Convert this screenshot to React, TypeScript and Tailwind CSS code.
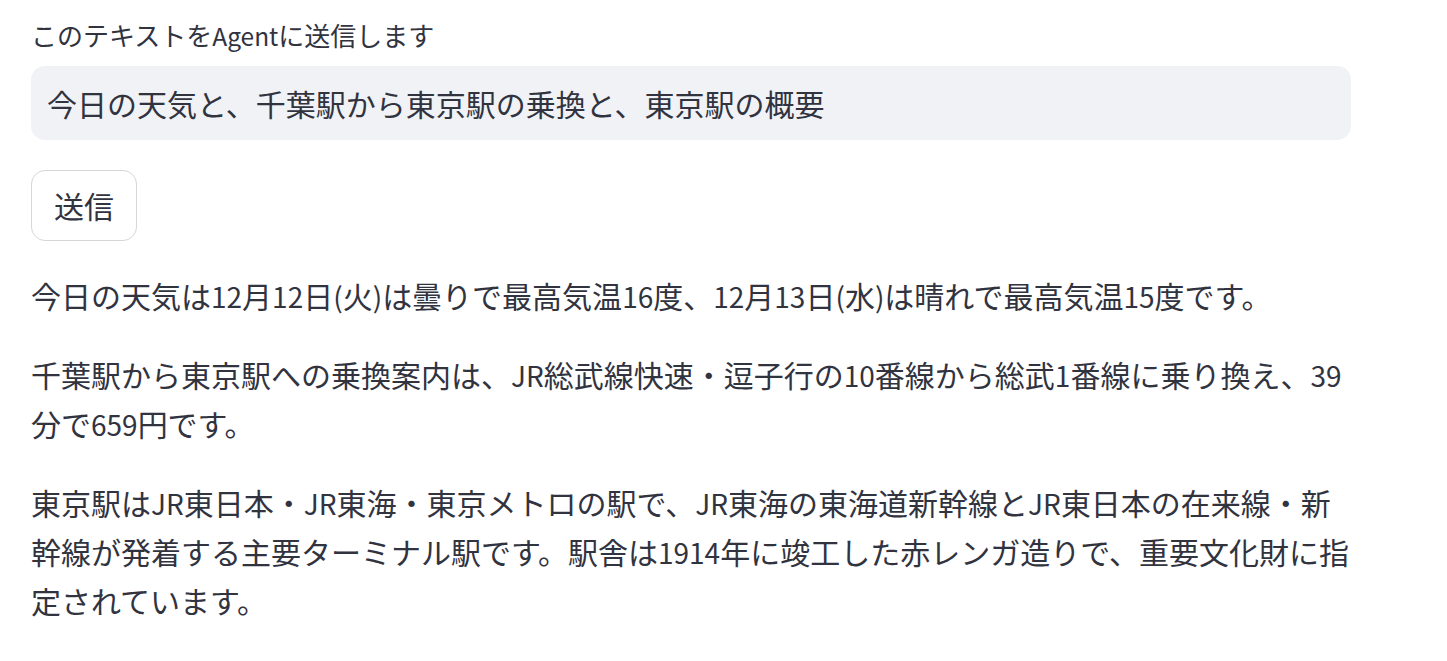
import React from "react";

function T({ text, latin }: { text: string; latin: string }) {
  const parts = text.split(/([\x20-\x7e]+)/);
  return (
    <>
      {parts.map((p, i) =>
        /^[\x20-\x7e]+$/.test(p) ? (
          <span key={i} className={latin}>
            {p}
          </span>
        ) : (
          <React.Fragment key={i}>
            {p.split("¦").map((s, j) => (
              <span key={j}>{s}</span>
            ))}
          </React.Fragment>
        )
      )}
    </>
  );
}

export default function App() {
  const font = { fontFamily: '"Noto Sans CJK JP", "Noto Sans", sans-serif' };
  const bodyLatin = "text-[28px]";
  return (
    <div className="min-h-screen bg-white text-[#31333f]" style={font}>
      <div className="w-[1320px] ml-[31px] pt-[20px]">
        <div className="text-[26px] leading-[30px] h-[30px]">
          <T text="このテキストをAgentに送信します" latin="text-[24.5px]" />
        </div>
        <div className="mt-[16px] h-[74px] rounded-[14px] bg-[#f0f2f6] flex items-center pl-[16px] text-[30px]">
          今日の天気と、千葉駅から東京駅の乗換と、東京駅の概要
        </div>
        <div className="mt-[30px]">
          <button className="h-[71px] w-[106px] rounded-[14px] border border-[#d6d6d9] bg-white text-[30px] flex items-center justify-center text-[#31333f]">
            送信
          </button>
        </div>
        <div className="mt-[30px] text-[30px] leading-[48px]">
          <p className="mb-[30px]">
            <T latin={bodyLatin} text="今日の天気は12月12日(火)は曇りで最高気温16度、12月13日(水)は晴れで最高気温15度です。" />
          </p>
          <p className="mb-[30px]">
            <T latin={bodyLatin} text="千葉駅から東京駅への乗換案内は、JR総武線快速・逗子行の10番線から総武1番線に乗り換え、39分で659円です。" />
          </p>
          <p>
            <T latin={bodyLatin} text="東京駅はJR東日本・JR東海・東京メトロの駅で、JR東海の東海道新幹線とJR東日本の在来線・新¦幹線が発着する主要ターミナル駅です。駅舎は1914年に竣工した赤レンガ造りで、重要文化財に指¦定されています。" />
          </p>
        </div>
      </div>
    </div>
  );
}
